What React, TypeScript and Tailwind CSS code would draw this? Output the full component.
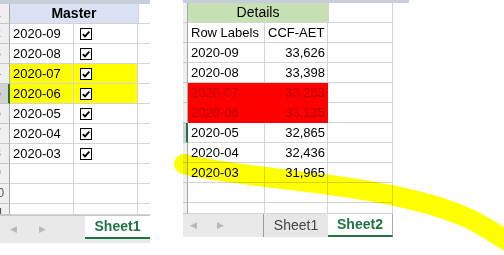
import React from "react";

const GRID = "border-[#d4d4d4]";

function Check() {
  return (
    <div className="w-[12px] h-[12px] border border-black bg-white flex items-center justify-center">
      <svg width="10" height="10" viewBox="0 0 10 10">
        <path d="M1.8 5.2 L4 7.4 L8.3 2.6" fill="none" stroke="#000" strokeWidth="1.8" />
      </svg>
    </div>
  );
}

function LeftRowHeader({ n, sel }: { n: number; sel?: boolean }) {
  return (
    <div
      className={`w-[10px] shrink-0 h-full overflow-hidden border-b border-r ${
        sel ? "bg-[#d2d2d2] border-r-[#217346] border-r-2" : "bg-[#efefef] border-r-[#a9a9a9]"
      } border-b-[#c6c6c6]`}
    >
      <div className="-ml-[15px] w-[25px] text-center text-[12px] leading-[19px] text-[#555]">{n}</div>
    </div>
  );
}

type LRow = { d?: string; hl?: boolean; n: number; sel?: boolean; h?: string };

function LeftPanel() {
  const rows: LRow[] = [
    { d: "2020-09", n: 2 },
    { d: "2020-08", n: 3 },
    { d: "2020-07", n: 4, hl: true },
    { d: "2020-06", n: 5, hl: true, sel: true },
    { d: "2020-05", n: 6 },
    { d: "2020-04", n: 7 },
    { d: "2020-03", n: 8 },
    { n: 9 },
    { n: 10 },
    { n: 11, h: "h-[11px]" },
  ];
  return (
    <div className="w-[150px] shrink-0 flex flex-col">
      <div className="h-[4px] bg-[#c8ced9]" />
      <div className="flex h-[20px]">
        <LeftRowHeader n={1} />
        <div className={`w-[128px] shrink-0 bg-[#d9e1f2] border-b ${GRID} flex items-center justify-center font-bold text-[14px]`}>
          Master
        </div>
        <div className={`flex-1 border-b border-l ${GRID}`} />
      </div>
      {rows.map((r, i) => (
        <div key={i} className={`flex ${r.h ?? "h-[20px]"} overflow-hidden`}>
          <LeftRowHeader n={r.n} sel={r.sel} />
          <div
            className={`w-[64px] shrink-0 border-b border-r ${GRID} ${r.hl ? "bg-[#ffff00]" : ""} flex items-center pl-[3px] text-[13px]`}
          >
            {r.d}
          </div>
          <div className={`w-[64px] shrink-0 border-b border-r ${GRID} ${r.hl ? "bg-[#ffff00]" : ""} flex items-center pl-[6px]`}>
            {r.d && <Check />}
          </div>
          <div className={`flex-1 border-b ${GRID}`} />
        </div>
      ))}
      <div className="h-[28px] flex border-t border-[#c6c6c6] bg-[#e9e9e9]">
        <div className="w-[85px] shrink-0 flex items-center text-[9px] text-[#b8b8b8]">
          <span className="ml-[10px]">◀</span>
          <span className="ml-[22px]">▶</span>
        </div>
        <div className="w-[65px] h-[23px] bg-white border-b-2 border-[#217346] flex items-center justify-center font-bold text-[14px] text-[#217346]">
          Sheet1
        </div>
      </div>
    </div>
  );
}

type RRow = { a?: string; b?: string; red?: boolean; sel?: boolean; h?: string; left?: boolean };

function RightPanel() {
  const rows: RRow[] = [
    { a: "Row Labels", b: "CCF-AET", left: true },
    { a: "2020-09", b: "33,626" },
    { a: "2020-08", b: "33,398" },
    { a: "2020-07", b: "33,253", red: true },
    { a: "2020-06", b: "33,135", red: true },
    { a: "2020-05", b: "32,865", sel: true },
    { a: "2020-04", b: "32,436" },
    { a: "2020-03", b: "31,965" },
    {},
    { h: "h-[11px]" },
  ];
  return (
    <div className="w-[226px] shrink-0 flex flex-col">
      <div className="h-[3px] bg-[#c8ced9]" />
      <div className="flex h-[20px]">
        <div className="w-[5px] shrink-0 bg-[#efefef] border-b border-r border-b-[#c6c6c6] border-r-[#a9a9a9]" />
        <div className={`w-[140px] shrink-0 bg-[#c6e0b4] border-b ${GRID} flex items-center justify-center text-[14px]`}>
          Details
        </div>
        <div className={`w-[65px] shrink-0 border-b border-l border-r ${GRID}`} />
      </div>
      {rows.map((r, i) => (
        <div key={i} className={`flex ${r.h ?? "h-[20px]"} overflow-hidden`}>
          <div
            className={`w-[5px] shrink-0 border-b border-r border-b-[#c6c6c6] ${
              r.sel ? "bg-[#d2d2d2] border-r-2 border-r-[#217346]" : "bg-[#efefef] border-r-[#a9a9a9]"
            }`}
          />
          <div
            className={`w-[77px] shrink-0 border-b border-r flex items-center pl-[3px] text-[13px] ${
              r.red ? "bg-[#ff0000] border-[#ff0000] text-[#b80000]" : GRID
            }`}
          >
            {r.a}
          </div>
          <div
            className={`w-[63px] shrink-0 border-b border-r flex items-center text-[13px] ${
              r.left ? "pl-[3px]" : "justify-end pr-[2px]"
            } ${r.red ? "bg-[#ff0000] border-[#ff0000] text-[#b80000]" : GRID}`}
          >
            {r.b}
          </div>
          <div className={`w-[65px] shrink-0 border-b border-r ${GRID}`} />
        </div>
      ))}
      <div className="h-[23px] flex">
        <div className="w-[80px] shrink-0 bg-[#e9e9e9] flex items-center text-[9px] text-[#b8b8b8]">
          <span className="ml-[7px]">◀</span>
          <span className="ml-[20px]">▶</span>
        </div>
        <div className="w-[65px] shrink-0 bg-[#e6e6e6] border-l border-[#9c9c9c] flex items-center justify-center text-[14px] text-[#444]">
          Sheet1
        </div>
        <div className="w-[65px] shrink-0 bg-white border-r border-r-[#a9a9a9] border-b-2 border-b-[#217346] flex items-center justify-center font-bold text-[14px] text-[#217346]">
          Sheet2
        </div>
      </div>
    </div>
  );
}

export default function App() {
  return (
    <div className="relative w-[504px] h-[255px] bg-white overflow-hidden flex font-['Liberation_Sans',Arial,sans-serif] text-black">
      <LeftPanel />
      <div className="w-[33px] shrink-0" />
      <RightPanel />
      <svg className="absolute inset-0 pointer-events-none mix-blend-multiply" width="504" height="255" viewBox="0 0 504 255">
        <path
          d="M184 164 C 215 172, 260 176, 330 185 C 390 193, 440 205, 470 219 C 486 227, 498 235, 510 243"
          fill="none"
          stroke="#ffff00"
          strokeWidth="20"
          strokeLinecap="round"
        />
      </svg>
    </div>
  );
}
